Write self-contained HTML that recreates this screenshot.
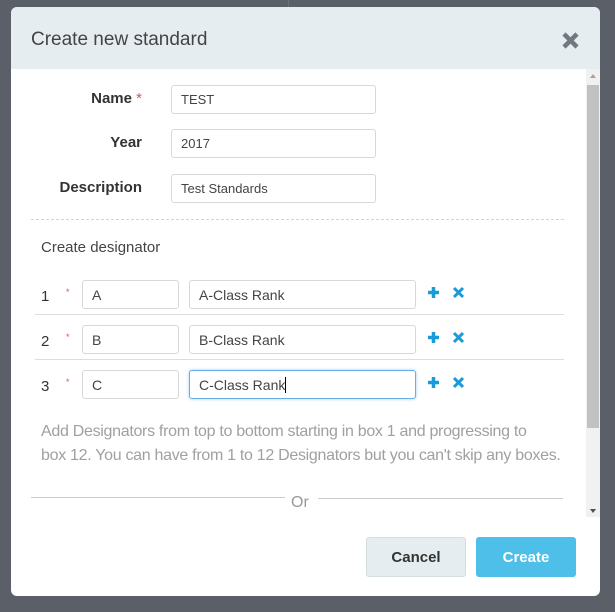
<!DOCTYPE html>
<html><head><style>
*{box-sizing:border-box;margin:0;padding:0}
body{width:615px;height:612px;background:#5b5f67;font-family:"Liberation Sans",sans-serif;position:relative;overflow:hidden}
.a{position:absolute}
.modal{left:11px;top:7px;width:589px;height:589px;background:#fff;border-radius:6px;overflow:hidden}
.hdr{left:0;top:0;width:589px;height:62px;background:#e6edf0}
.inp{position:absolute;border:1px solid #d8d8d8;border-radius:3px;background:#fff;font-size:13px;color:#444;padding-left:9px;display:flex;align-items:center}
.lbl{position:absolute;font-size:15px;font-weight:bold;color:#333;text-align:right;width:140px;left:0}
.num{position:absolute;left:30px;font-size:15px;color:#333}
.ast{position:absolute;left:55px;font-size:9px;color:#d9534f}
.hl{position:absolute;left:24px;width:529px;height:1px;background:#ddd}
</style></head><body>
<div class="a" style="left:288px;top:0;width:1px;height:7px;background:#6b6f77"></div>
<div class="a modal">
 <div class="a hdr"></div>
 <div class="a" style="left:20px;top:22px;font-size:19px;color:#444">Create new standard</div>
 <svg class="a" style="left:551px;top:25px" width="17" height="17" viewBox="0 0 17 17"><path d="M2 2L15 15M15 2L2 15" stroke="#707880" stroke-width="4.5"/></svg>
 <div class="a" style="left:575px;top:62px;width:14px;height:448px;background:#f1f1f1"></div>
 <div class="a" style="left:576px;top:78px;width:12px;height:343px;background:#c1c1c1"></div>
 <div class="a" style="left:579px;top:67px;width:0;height:0;border:3px solid transparent;border-bottom:4px solid #a3a3a3;border-top:0"></div>
 <div class="a" style="left:579px;top:502px;width:0;height:0;border:3px solid transparent;border-top:4px solid #505050;border-bottom:0"></div>

 <div class="lbl" style="top:83px;width:131px">Name <span style="color:#d9534f;font-weight:normal">*</span></div>
 <div class="lbl" style="top:127px;width:131px">Year</div>
 <div class="lbl" style="top:172px;width:131px">Description</div>
 <div class="inp" style="left:160px;top:78px;width:205px;height:29px">TEST</div>
 <div class="inp" style="left:160px;top:122px;width:205px;height:29px">2017</div>
 <div class="inp" style="left:160px;top:167px;width:205px;height:29px">Test Standards</div>
 <div class="a" style="left:20px;top:212px;width:533px;border-top:1px dashed #d5d5d5"></div>
 <div class="a" style="left:30px;top:232px;font-size:15px;color:#444">Create designator</div>

 <div class="num" style="top:281px">1</div><div class="ast" style="top:280px">*</div>
 <div class="inp" style="left:71px;top:273px;width:97px;height:29px;font-size:14px">A</div>
 <div class="inp" style="left:178px;top:273px;width:227px;height:29px;font-size:14px">A-Class Rank</div>
 <div class="hl" style="top:307px"></div>
 <div class="num" style="top:326px">2</div><div class="ast" style="top:325px">*</div>
 <div class="inp" style="left:71px;top:318px;width:97px;height:29px;font-size:14px">B</div>
 <div class="inp" style="left:178px;top:318px;width:227px;height:29px;font-size:14px">B-Class Rank</div>
 <div class="hl" style="top:352px"></div>
 <div class="num" style="top:371px">3</div><div class="ast" style="top:370px">*</div>
 <div class="inp" style="left:71px;top:363px;width:97px;height:29px;font-size:14px">C</div>
 <div class="inp" style="left:178px;top:363px;width:227px;height:29px;font-size:14px;border-color:#66afe9;box-shadow:0 0 3px rgba(102,175,233,.6)">C-Class Rank<span style="display:inline-block;width:1px;height:16px;background:#000"></span></div>

 <svg class="a" style="left:416px;top:279px" width="13" height="13"><path d="M6.5 1V12M1 6.5H12" stroke="#1a9ad6" stroke-width="3.5"/></svg>
 <svg class="a" style="left:441px;top:279px" width="13" height="13"><path d="M2 2L11 11M11 2L2 11" stroke="#1a9ad6" stroke-width="3"/></svg>
 <svg class="a" style="left:416px;top:324px" width="13" height="13"><path d="M6.5 1V12M1 6.5H12" stroke="#1a9ad6" stroke-width="3.5"/></svg>
 <svg class="a" style="left:441px;top:324px" width="13" height="13"><path d="M2 2L11 11M11 2L2 11" stroke="#1a9ad6" stroke-width="3"/></svg>
 <svg class="a" style="left:416px;top:369px" width="13" height="13"><path d="M6.5 1V12M1 6.5H12" stroke="#1a9ad6" stroke-width="3.5"/></svg>
 <svg class="a" style="left:441px;top:369px" width="13" height="13"><path d="M2 2L11 11M11 2L2 11" stroke="#1a9ad6" stroke-width="3"/></svg>

 <div class="a" style="left:30px;top:413px;width:545px;font-size:16px;letter-spacing:-0.3px;line-height:24px;color:#a0a0a0;white-space:nowrap">Add Designators from top to bottom starting in box 1 and progressing to<br>box 12. You can have from 1 to 12 Designators but you can't skip any boxes.</div>
 <div class="a" style="left:20px;top:490px;width:254px;height:1px;background:#ccc"></div>
 <div class="a" style="left:307px;top:491px;width:245px;height:1px;background:#ccc"></div>
 <div class="a" style="left:280px;top:487px;font-size:16px;color:#999">Or</div>

 <div class="a" style="left:355px;top:530px;width:100px;height:40px;background:#e6edf0;border:1px solid #d5dde0;border-radius:3px;font-size:15px;font-weight:bold;color:#333;display:flex;align-items:center;justify-content:center">Cancel</div>
 <div class="a" style="left:465px;top:530px;width:100px;height:40px;background:#4dbfe8;border-radius:3px;font-size:15px;font-weight:bold;color:#fff;display:flex;align-items:center;justify-content:center">Create</div>
</div>
</body></html>
